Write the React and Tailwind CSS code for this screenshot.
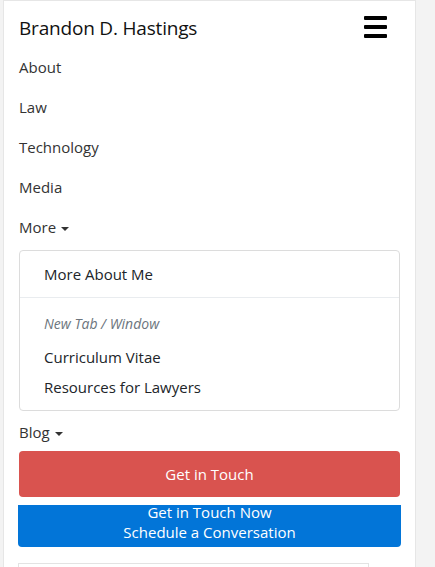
import React from "react";

const Caret = () => (
    <span className="inline-block ml-[5px] align-middle w-0 h-0 border-t-[4px] border-t-current border-x-[4px] border-x-transparent" />
);

const NavItem = ({ label, caret }) => (
    <div className="py-2 leading-6 text-[15px] text-[#333]">
        {label}
        {caret && <Caret />}
    </div>
);

const App = () => {
    const links = ["About", "Law", "Technology", "Media"];

    return (
        <div
            className="min-h-[567px] bg-[#f3f3f3] pl-[3px] w-[435px] overflow-hidden"
            style={{ fontFamily: '"Open Sans", "Noto Sans", sans-serif' }}
        >
            <div className="w-[413px] bg-white border border-[#e6e6e6] border-b-0 min-h-[567px] px-[15px]">
                {/* barre du haut */}
                <div className="flex items-center justify-between pt-[8px] h-[46px]">
                    <div className="text-[19px] leading-[30px] text-[#111] tracking-[-0.01em]">Brandon D. Hastings</div>
                    <button className="flex flex-col gap-[5px] w-[23px] mr-[13px] -mt-[2px]">
                        <span className="block h-[4px] bg-black rounded-[1px]" />
                        <span className="block h-[4px] bg-black rounded-[1px]" />
                        <span className="block h-[4px] bg-black rounded-[1px]" />
                    </button>
                </div>

                {links.map((l) => (
                    <NavItem key={l} label={l} />
                ))}
                <NavItem label="More" caret />

                {/* menu déroulant */}
                <div className="mt-[3px] border border-[#dcdcdc] rounded-[4px] py-2 w-[381px]">
                    <div className="px-6 leading-[30px] text-[15px] text-[#212529]">More About Me</div>
                    <div className="my-2 border-t border-[#e9ecef]" />
                    <div className="px-6 py-2 leading-5 text-[14px] italic text-[#6c757d]">New Tab / Window</div>
                    <div className="px-6 leading-[30px] text-[15px] text-[#212529]">Curriculum Vitae</div>
                    <div className="px-6 leading-[30px] text-[15px] text-[#212529]">Resources for Lawyers</div>
                </div>

                <div className="pt-2 pb-[7px] mt-[1px] leading-6 text-[15px] text-[#333]">
                    Blog
                    <Caret />
                </div>

                <button className="w-[381px] h-[46px] rounded-[4px] bg-[#d9534f] text-white text-[15px] flex items-center justify-center">
                    Get in Touch
                </button>

                <div className="mt-[8px] -ml-[1px] w-[383px] h-[42px] flex flex-col bg-[#0275d8] rounded-b-[4px] text-white text-[15px] leading-[20px] text-center">
                    <div className="-mt-[3px]">
                        Get in Touch Now
                        <br />
                        Schedule a Conversation
                    </div>
                </div>

                <div className="mt-[16px] -ml-[1px] w-[351px] h-[20px] border border-[#e3e3e3] border-b-0" />
            </div>
        </div>
    );
};

export default App;
